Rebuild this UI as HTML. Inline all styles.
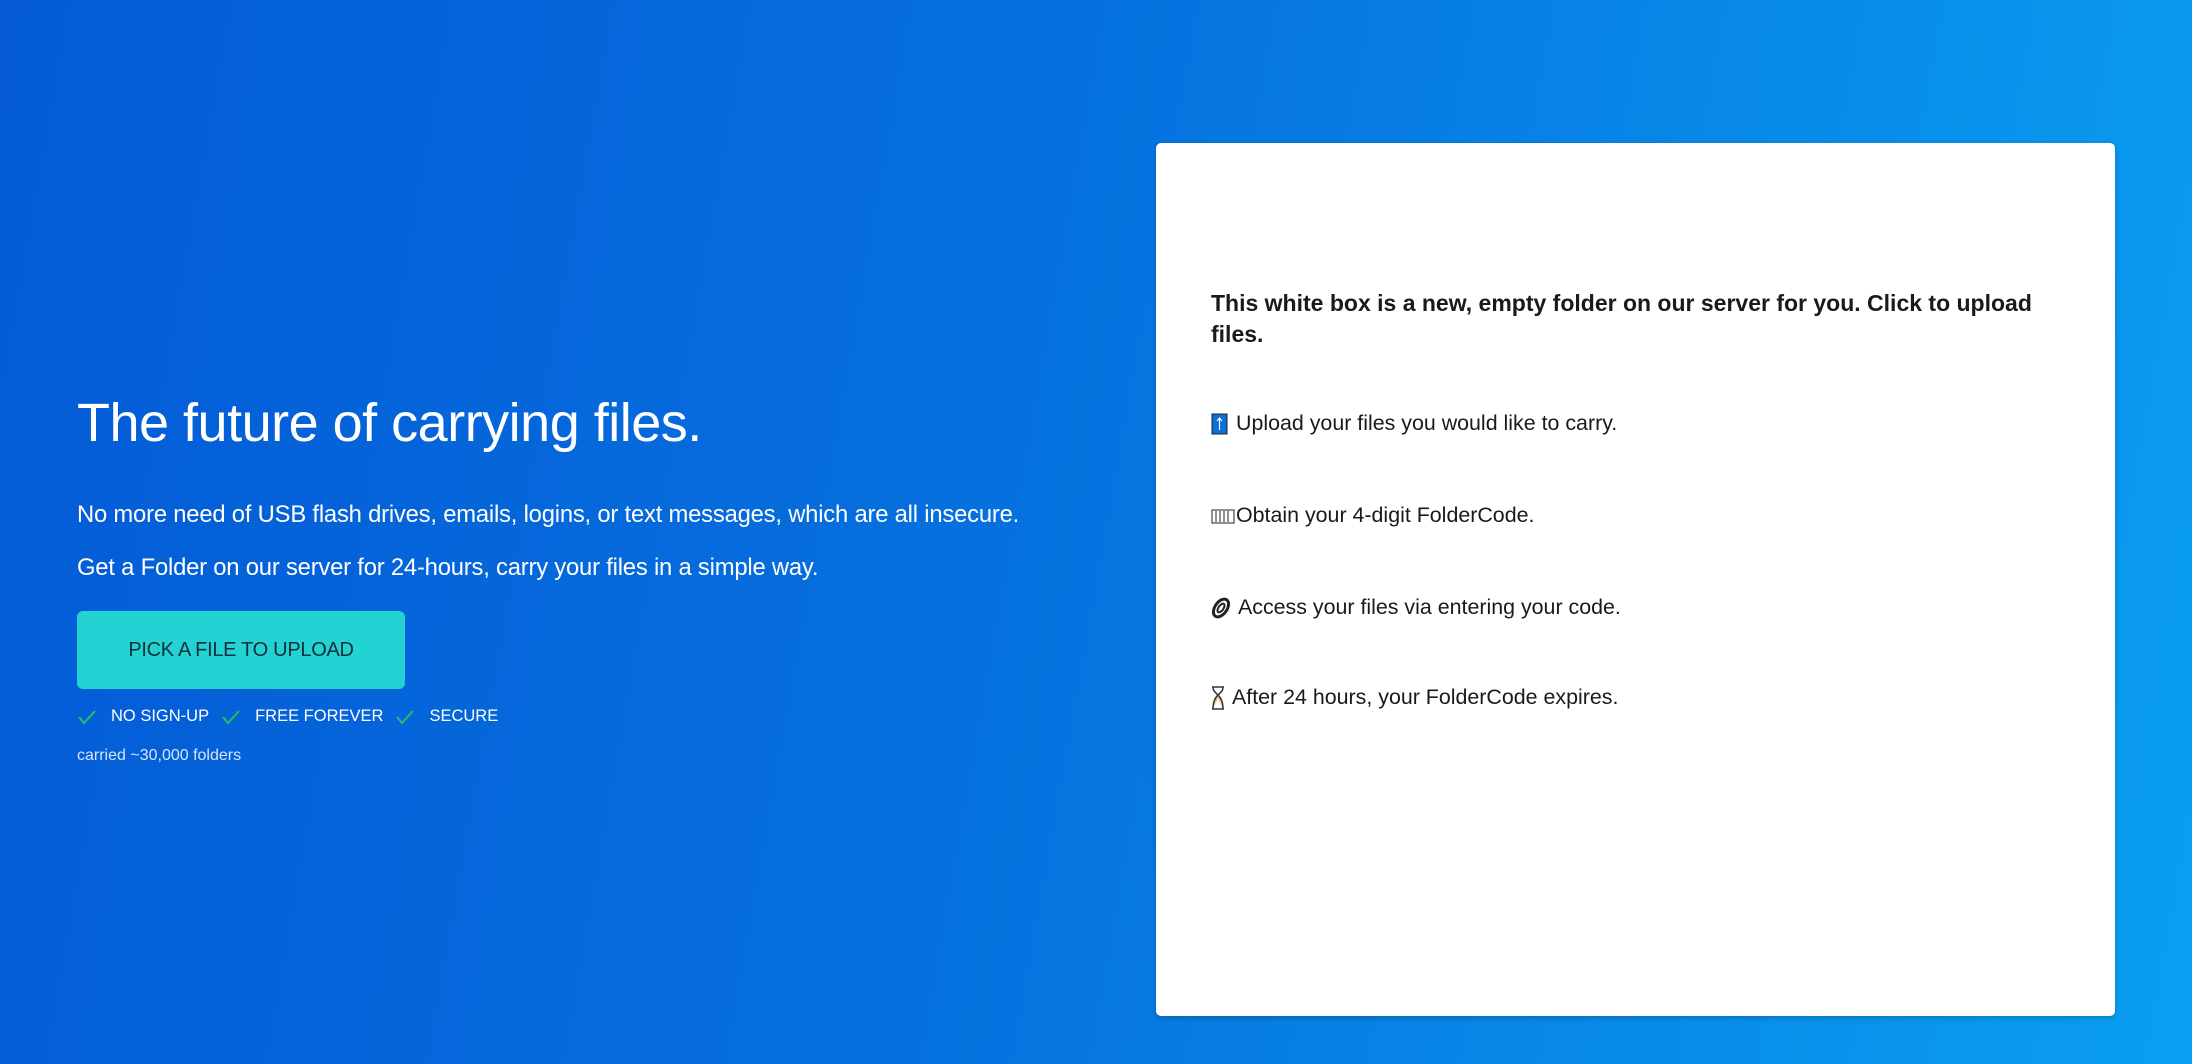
<!DOCTYPE html>
<html><head><meta charset="utf-8"><style>
html,body{margin:0;padding:0}
body{width:2192px;height:1064px;overflow:hidden;position:relative;font-family:"Liberation Sans",sans-serif;
background:linear-gradient(100deg,#045ad6 0%,#0670de 45%,#0a9ff0 100%);color:#fff}
.a{position:absolute;white-space:nowrap}
h1{position:absolute;left:77px;top:392px;margin:0;font-size:54px;font-weight:normal;letter-spacing:-0.5px}
.p{font-size:23.8px;left:77px;letter-spacing:-0.2px}
.btn{position:absolute;left:77px;top:611px;width:328px;height:78px;background:#23d3d3;border-radius:6px;color:#10303a;font-size:20px;display:flex;align-items:center;justify-content:center;letter-spacing:-0.3px}
.chk{left:77px;top:707px;font-size:16.5px;display:flex;align-items:center}
.chk svg{margin-right:14px}
.chk span{margin-right:12px}
.box{position:absolute;left:1156px;top:143px;width:959px;height:873px;background:#fff;border-radius:5px;box-shadow:0 2px 6px rgba(0,0,0,.2);color:#1a1a1a}
.bh{position:absolute;left:55px;top:145px;width:850px;font-weight:bold;font-size:23px;line-height:31px}
.it{position:absolute;left:55px;font-size:21.4px;display:flex;align-items:center;white-space:nowrap}
.ic{display:inline-block;margin-right:7px}
</style></head><body>
<h1>The future of carrying files.</h1>
<div class="a p" style="top:501px">No more need of USB flash drives, emails, logins, or text messages, which are all insecure.</div>
<div class="a p" style="top:554px">Get a Folder on our server for 24-hours, carry your files in a simple way.</div>
<div class="btn">PICK A FILE TO UPLOAD</div>
<div class="a chk">
<svg width="20" height="16" viewBox="0 0 20 16"><path d="M2 8l5 6L18 2" fill="none" stroke="#20c06a" stroke-width="2"/></svg><span>NO SIGN-UP</span>
<svg width="20" height="16" viewBox="0 0 20 16"><path d="M2 8l5 6L18 2" fill="none" stroke="#20c06a" stroke-width="2"/></svg><span>FREE FOREVER</span>
<svg width="20" height="16" viewBox="0 0 20 16"><path d="M2 8l5 6L18 2" fill="none" stroke="#20c06a" stroke-width="2"/></svg><span>SECURE</span>
</div>
<div class="a" style="left:77px;top:747px;font-size:16px;color:#d6e6fa">carried ~30,000 folders</div>
<div class="box">
<div class="bh">This white box is a new, empty folder on our server for you. Click to upload files.</div>
<div class="it" style="top:268px"><svg class="ic" width="18" height="22" viewBox="0 0 18 22"><rect x="1" y="1" width="15" height="20" fill="#0a6fd8" stroke="#222" stroke-width="1"/><path d="M8.5 17V5M6 8l2.5-3 2.5 3" stroke="#fff" fill="none" stroke-width="1.2"/></svg>Upload your files you would like to carry.</div>
<div class="it" style="top:360px"><svg class="ic" style="margin-right:1px" width="24" height="16" viewBox="0 0 24 16"><rect x="1" y="2" width="22" height="13" fill="none" stroke="#222"/><path d="M5 3v11M9 3v11M13 3v11M17 3v11" stroke="#222"/></svg>Obtain your 4-digit FolderCode.</div>
<div class="it" style="top:452px"><svg class="ic" width="20" height="24" viewBox="0 0 20 24"><ellipse cx="10" cy="12" rx="6" ry="10" transform="rotate(35 10 12)" fill="none" stroke="#222" stroke-width="3"/><ellipse cx="10" cy="12" rx="2.5" ry="5" transform="rotate(35 10 12)" fill="none" stroke="#222" stroke-width="2"/></svg>Access your files via entering your code.</div>
<div class="it" style="top:542px"><svg class="ic" width="14" height="24" viewBox="0 0 14 24"><path d="M1 1h12M1 23h12M2 1c0 8 10 6 10 22M12 1c0 8-10 6-10 22" fill="#f5c26b" stroke="#333" stroke-width="1.5"/></svg>After 24 hours, your FolderCode expires.</div>
</div>
</body></html>
